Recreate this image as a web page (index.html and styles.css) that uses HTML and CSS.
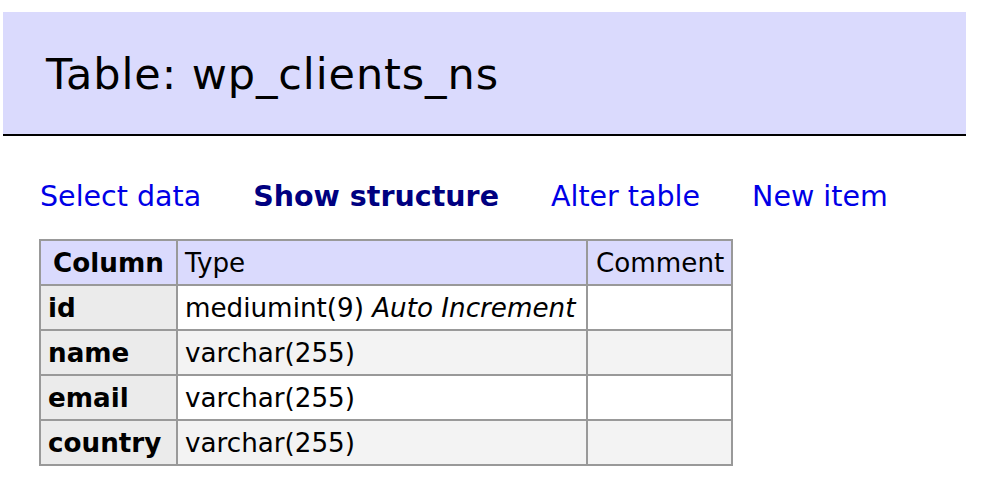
FILE: index.html
```html
<!DOCTYPE html>
<html lang="en">
<head>
<meta charset="utf-8">
<title>Table: wp_clients_ns</title>
<link rel="stylesheet" href="styles.css">
</head>
<body>
<div class="page">
  <h2 class="title">Table: wp_clients_ns</h2>
  <p class="links">
    <a class="link" href="#">Select data</a>
    <a class="link active" href="#">Show structure</a>
    <a class="link" href="#">Alter table</a>
    <a class="link" href="#">New item</a>
  </p>
  <table class="structure">
    <thead>
      <tr><th class="col-name">Column</th><td class="col-type">Type</td><td class="col-comment">Comment</td></tr>
    </thead>
    <tbody>
      <tr><th>id</th><td>mediumint(9) <i>Auto Increment</i></td><td></td></tr>
      <tr class="odd"><th>name</th><td>varchar(255)</td><td></td></tr>
      <tr><th>email</th><td>varchar(255)</td><td></td></tr>
      <tr class="odd"><th>country</th><td>varchar(255)</td><td></td></tr>
    </tbody>
  </table>
</div>
</body>
</html>
```

FILE: styles.css
```css
html, body {
  margin: 0;
  padding: 0;
  background: #fff;
}
body {
  font-family: "DejaVu Sans", Verdana, sans-serif;
  color: #000;
}
.page {
  padding-top: 12px;
}
.title {
  margin: 0 20px 0 3px;
  padding: 38px 43px 35px;
  background: #dadafd;
  border-bottom: 2px solid #000;
  font-size: 43px;
  letter-spacing: 0.9px;
  line-height: 49px;
  font-weight: normal;
}
.links {
  display: flex;
  gap: 52px;
  margin: 44px 0 26px 40px;
  font-size: 28.5px;
  line-height: 33px;
}
.link {
  color: #0000e6;
  text-decoration: none;
  white-space: nowrap;
}
.link.active {
  color: #000080;
  font-weight: bold;
}
.structure {
  margin-left: 39px;
  border-collapse: collapse;
  font-size: 26.2px;
  line-height: 30px;
}
.structure th,
.structure td {
  border: 2px solid #999;
  padding: 7px 7px 6px;
  text-align: left;
  white-space: nowrap;
  vertical-align: top;
}
.structure .col-name {
  width: 121px;
  text-align: center;
}
.structure .col-type {
  width: 394px;
}
.structure .col-comment {
  width: 125px;
  padding-left: 8px;
}
.structure thead th,
.structure thead td {
  background: #dadafd;
}
.structure tbody th {
  background: #ebebeb;
}
.structure tbody tr.odd td {
  background: #f3f3f3;
}
.structure i {
  font-style: italic;
}
```
